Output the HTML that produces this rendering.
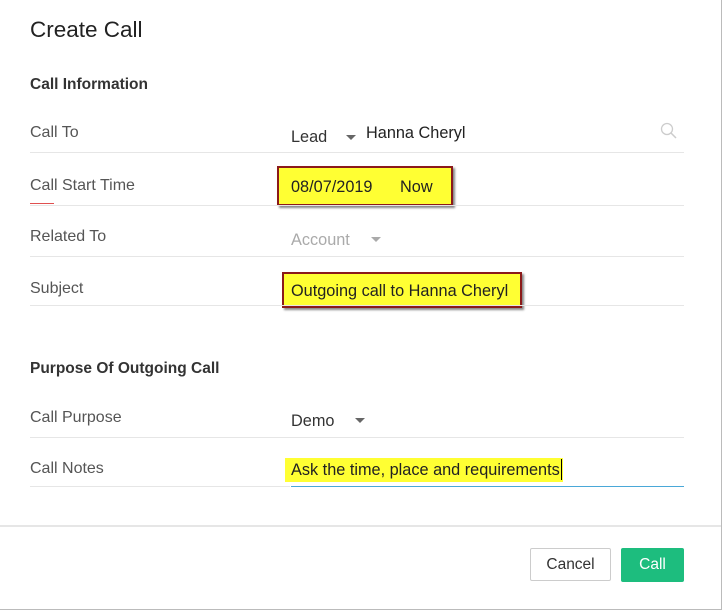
<!DOCTYPE html>
<html><head><style>
body{margin:0;width:723px;height:611px;background:#fff;font-family:"Liberation Sans",sans-serif;position:relative;overflow:hidden;color:#333}
.a{position:absolute;white-space:nowrap}
.lbl{font-size:16px;color:#555}
.line{position:absolute;height:1px;background:#e6e6e6}
.hl{position:absolute;background:#ffff33;border:2px solid #8b1a1a;box-shadow:2px 2px 2px #888}
.caret{position:absolute;width:0;height:0;border-left:5px solid transparent;border-right:5px solid transparent;border-top:5px solid #666}
.v{font-size:16.3px;color:#222}
</style></head><body>
<div style="position:absolute;left:0;top:0;width:721px;height:609px;border-right:1px solid #bbb;border-bottom:1px solid #bbb"></div>
<div class="a" style="left:30px;top:17px;font-size:22.5px;color:#222">Create Call</div>
<div class="a" style="left:30px;top:76px;font-size:15.5px;font-weight:bold;color:#333">Call Information</div>

<div class="a lbl" style="left:30px;top:124px">Call To</div>
<div class="a v" style="left:291px;top:128px;color:#333">Lead</div>
<div class="caret" style="left:346px;top:135px"></div>
<div class="a v" style="left:366px;top:124px">Hanna Cheryl</div>
<svg style="position:absolute;left:660px;top:122px" width="18" height="18"><circle cx="7" cy="7" r="5.5" fill="none" stroke="#ccc" stroke-width="1.3"/><line x1="11" y1="11" x2="16" y2="16" stroke="#ccc" stroke-width="1.5"/></svg>
<div class="line" style="left:30px;top:152px;width:654px"></div>

<div class="a lbl" style="left:30px;top:177px">Call Start Time</div>
<div style="position:absolute;left:30px;top:203px;width:24px;height:1px;background:#e05050"></div>
<div class="hl" style="left:277px;top:166px;width:172px;height:36px"></div>
<div class="a v" style="left:291px;top:178px">08/07/2019</div>
<div class="a v" style="left:400px;top:178px">Now</div>
<div class="line" style="left:30px;top:205px;width:654px"></div>

<div class="a lbl" style="left:30px;top:228px">Related To</div>
<div class="a v" style="left:291px;top:231px;color:#aaa">Account</div>
<div class="caret" style="left:371px;top:237px;border-top-color:#aaa"></div>
<div class="line" style="left:30px;top:256px;width:654px"></div>

<div class="a lbl" style="left:30px;top:280px">Subject</div>
<div class="hl" style="left:282px;top:272px;width:236px;height:32px"></div>
<div class="a v" style="left:291px;top:282px">Outgoing call to Hanna Cheryl</div>
<div class="line" style="left:30px;top:305px;width:654px"></div>

<div class="a" style="left:30px;top:360px;font-size:15.5px;font-weight:bold;color:#333">Purpose Of Outgoing Call</div>

<div class="a lbl" style="left:30px;top:409px">Call Purpose</div>
<div class="a v" style="left:291px;top:412px;color:#333">Demo</div>
<div class="caret" style="left:355px;top:418px"></div>
<div class="line" style="left:30px;top:437px;width:654px"></div>

<div class="a lbl" style="left:30px;top:460px">Call Notes</div>
<div style="position:absolute;left:285px;top:458px;width:278px;height:24px;background:#ffff33"></div>
<div class="a v" style="left:291px;top:461px">Ask the time, place and requirements</div>
<div style="position:absolute;left:561px;top:459px;width:1px;height:21px;background:#000"></div>
<div class="line" style="left:30px;top:486px;width:260px"></div>
<div style="position:absolute;left:291px;top:486px;width:393px;height:1px;background:#4aa8d8"></div>

<div style="position:absolute;left:0;top:525px;width:721px;height:2px;background:#e6e6e6"></div>
<div style="position:absolute;left:530px;top:548px;width:81px;height:33px;border:1px solid #ccc;border-radius:2px;box-sizing:border-box;text-align:center;line-height:31px;font-size:15.5px;color:#333">Cancel</div>
<div style="position:absolute;left:621px;top:548px;width:63px;height:34px;background:#1dbd7e;border-radius:2px;text-align:center;line-height:34px;font-size:15.5px;color:#fff">Call</div>
</body></html>
